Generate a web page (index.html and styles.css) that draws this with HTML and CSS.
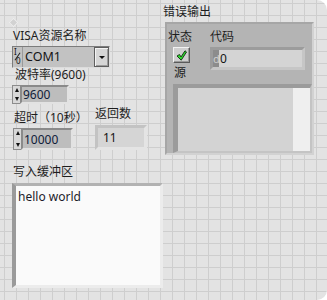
FILE: index.html
```html
<!DOCTYPE html>
<html lang="zh-CN">
<head>
    <meta charset="UTF-8">
    <meta name="viewport" content="width=device-width, initial-scale=1.0">
    <title>VISA 写入</title>
    <link rel="stylesheet" href="styles.css">
</head>
<body>
    <div class="panel">
        <div class="origin"></div>

        <!-- VISA resource -->
        <div class="label" id="lbl-visa">VISA资源名称</div>
        <div class="visa">
            <span class="io"><i class="io-top">I</i><i class="io-slash"></i><i class="io-bot">0</i></span>
            <span class="visa-text">COM1</span>
            <span class="ring-btn"><span class="tri-down"></span></span>
        </div>

        <!-- baud rate -->
        <div class="label" id="lbl-baud">波特率(9600)</div>
        <div class="num" id="num-baud">
            <div class="spin"><span class="tri-up"></span><span class="tri-down"></span></div>
            <div class="num-field">9600</div>
        </div>

        <!-- timeout -->
        <div class="label" id="lbl-timeout">超时（10秒）</div>
        <div class="num" id="num-timeout">
            <div class="spin"><span class="tri-up"></span><span class="tri-down"></span></div>
            <div class="num-field">10000</div>
        </div>

        <!-- return count -->
        <div class="label" id="lbl-count">返回数</div>
        <div class="indicator">11</div>

        <!-- write buffer -->
        <div class="label" id="lbl-buffer">写入缓冲区</div>
        <div class="string-ctl">
            <div class="string-inner">hello world</div>
        </div>

        <!-- error out cluster -->
        <div class="label" id="lbl-error">错误输出</div>
        <div class="cluster">
            <div class="cluster-top">
                <div class="cluster-col">
                    <div class="clabel">状态</div>
                    <div class="checkbox">
                        <svg width="11" height="11" viewBox="0 0 11 11">
                            <path d="M1 6 L3.5 4.5 L5 7 L9 0.8 L10.5 2 L5.2 10.2 Z" fill="#2ee02e" stroke="#1a3a1a" stroke-width="1" stroke-linejoin="round"/>
                        </svg>
                    </div>
                    <div class="clabel src">源</div>
                </div>
                <div class="cluster-col">
                    <div class="clabel">代码</div>
                    <div class="code-num">
                        <span class="radix">d</span>
                        <span class="code-field">0</span>
                    </div>
                </div>
            </div>
            <div class="source-box">
                <div class="source-text"></div>
                <div class="scroll-strip"></div>
            </div>
        </div>
    </div>
</body>
</html>
```

FILE: styles.css
```css
body {
    margin: 0;
    background-color: #fff;
}

.panel {
    position: relative;
    width: 327px;
    height: 300px;
    overflow: hidden;
    border-radius: 0 10px 10px 0;
    background-color: #e3e3e3;
    background-image:
        linear-gradient(to right, #cecece 1px, transparent 1px),
        linear-gradient(to bottom, #cecece 1px, transparent 1px);
    background-size: 12px 12px;
    background-position: 4px 3px;
    font-family: "Noto Sans", "Noto Sans CJK SC", sans-serif;
    font-size: 12px;
    color: #141414;
}

.origin {
    position: absolute;
    left: 10px;
    top: 19px;
    width: 5px;
    height: 5px;
    background-color: #d2d2d2;
    border: 1px solid #ededed;
    transform: rotate(45deg);
}

.label {
    position: absolute;
    line-height: 14px;
    white-space: nowrap;
    color: #1e1e1e;
}

#lbl-visa { left: 13px; top: 29px; }
#lbl-baud { left: 15px; top: 68px; }
#lbl-timeout { left: 14px; top: 111px; }
#lbl-count { left: 95px; top: 107px; }
#lbl-buffer { left: 13px; top: 165px; }
#lbl-error { left: 163px; top: 5px; }

/* VISA resource control */
.visa {
    position: absolute;
    left: 12px;
    top: 46px;
    width: 98px;
    height: 22px;
    box-sizing: border-box;
    display: flex;
    align-items: stretch;
    border: 1px solid;
    border-color: #7c7c7c #dcdcdc #dcdcdc #7c7c7c;
    background-color: #c2c2c2;
}

.io {
    position: relative;
    width: 9px;
    flex: none;
    overflow: hidden;
    font-size: 8px;
    line-height: 8px;
}

.io i {
    position: absolute;
    font-style: normal;
}

.io-top { left: 1px; top: 1px; }
.io-bot { left: 3px; top: 10px; }

.io-slash {
    left: 0;
    top: 9px;
    width: 9px;
    height: 1px;
    background-color: #222;
    transform: rotate(-55deg);
}

.visa-text {
    flex: 1;
    padding-left: 2px;
    line-height: 20px;
    font-size: 12.5px;
    border-left: 1px solid #9a9a9a;
}

.ring-btn {
    width: 15px;
    flex: none;
    display: flex;
    align-items: center;
    justify-content: center;
    box-sizing: border-box;
    border: 1px solid #5e5e5e;
    box-shadow: inset 1px 1px 0 #f4f4f4, inset -1px -1px 0 #9c9c9c;
    background-color: #d6d6d6;
}

.tri-down,
.tri-up {
    display: block;
    width: 0;
    height: 0;
    border-left: 3px solid transparent;
    border-right: 3px solid transparent;
}

.tri-down { border-top: 3px solid #111; }
.tri-up { border-bottom: 3px solid #111; }

/* numeric controls */
.num {
    position: absolute;
    display: flex;
}

#num-baud { left: 12px; top: 85px; width: 57px; height: 19px; }
#num-timeout { left: 13px; top: 128px; width: 60px; height: 22px; }

.spin {
    width: 8px;
    flex: none;
    display: flex;
    flex-direction: column;
    justify-content: space-between;
    align-items: center;
    padding: 2px 0;
    box-sizing: border-box;
    background-color: #d8d8d8;
    border: 1px solid #8c8c8c;
    border-right: none;
}

.spin .tri-up,
.spin .tri-down {
    border-left-width: 2.5px;
    border-right-width: 2.5px;
}

.spin .tri-up { border-bottom-width: 4px; }
.spin .tri-down { border-top-width: 4px; }

.num-field {
    flex: 1;
    box-sizing: border-box;
    display: flex;
    align-items: center;
    padding-left: 1px;
    border: 2px solid;
    border-color: #8a8a8a #e2e2e2 #e2e2e2 #8a8a8a;
    background-color: #bdbdbd;
    color: #10203a;
}

/* return count indicator */
.indicator {
    position: absolute;
    left: 95px;
    top: 125px;
    width: 52px;
    height: 25px;
    box-sizing: border-box;
    padding-left: 5px;
    line-height: 19px;
    border: 3px solid;
    border-color: #c3c3c3 #e4e4e4 #e4e4e4 #c3c3c3;
    background-color: #d5d5d5;
}

/* write buffer string */
.string-ctl {
    position: absolute;
    left: 12px;
    top: 183px;
    width: 151px;
    height: 105px;
    box-sizing: border-box;
    border: 3px solid;
    border-color: #b2b2b2 #ececec #ececec #9a9a9a;
    border-left-width: 4px;
    background-color: #fafafa;
}

.string-inner {
    padding: 4px 0 0 2px;
    line-height: 14px;
    color: #1c1c2a;
}

/* error cluster */
.cluster {
    position: absolute;
    left: 165px;
    top: 22px;
    width: 149px;
    height: 133px;
    box-sizing: border-box;
    padding: 6px 0 0 1px;
    border: 2px solid;
    border-color: #a6a6a6 #d2d2d2 #d2d2d2 #a6a6a6;
    background-color: #b4b4b4;
}

.cluster-top {
    display: flex;
    height: 50px;
}

.cluster-col {
    display: flex;
    flex-direction: column;
    align-items: flex-start;
}

.cluster-col:first-child { width: 42px; }

.clabel {
    line-height: 14px;
    white-space: nowrap;
    color: #1e1e1e;
}

.clabel.src {
    margin: 3px 0 0 6px;
}

.checkbox {
    margin: 3px 0 0 5px;
    width: 17px;
    height: 16px;
    box-sizing: border-box;
    display: flex;
    align-items: center;
    justify-content: center;
    border: 1px solid;
    border-color: #f2f2f2 #5a5a5a #5a5a5a #f2f2f2;
    box-shadow: inset -1px -1px 0 #9a9a9a;
    background-color: #cfcfcf;
}

.code-num {
    margin-top: 3px;
    width: 95px;
    height: 23px;
    box-sizing: border-box;
    display: flex;
    border: 3px solid;
    border-color: #9c9c9c #c6c6c6 #c6c6c6 #9c9c9c;
}

.radix {
    width: 6px;
    flex: none;
    line-height: 17px;
    font-size: 11px;
    text-align: center;
    color: #cfcfcf;
    background-color: #8c8c8c;
}

.code-field {
    flex: 1;
    padding-left: 1px;
    line-height: 17px;
    background-color: #d4d4d4;
}

.source-box {
    margin: 4px 0 0 5px;
    width: 139px;
    height: 69px;
    box-sizing: border-box;
    display: flex;
    border: 2px solid;
    border-color: #9b9b9b #c4c4c4 #c4c4c4 #9b9b9b;
    border-top-width: 4px;
    border-left-width: 5px;
}

.source-text {
    flex: 1;
    background-color: #d3d3d3;
}

.scroll-strip {
    width: 17px;
    background-color: #efefef;
}
```
